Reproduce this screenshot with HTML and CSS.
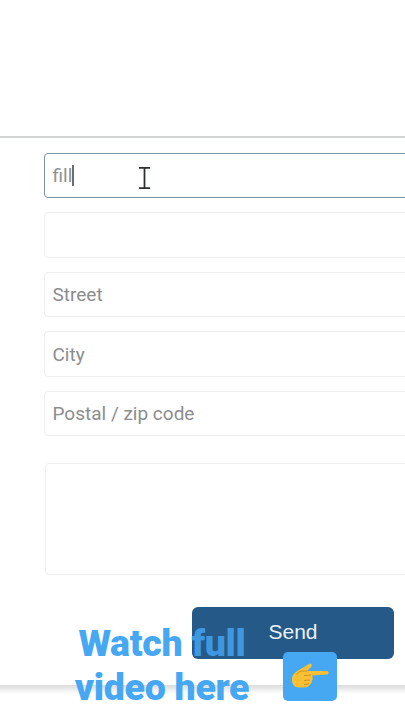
FILE: index.html
```html
<!DOCTYPE html>
<html lang="en">
<head>
<meta charset="utf-8">
<title>Contact form</title>
<link rel="stylesheet" href="styles.css">
</head>
<body>
<div class="page">
  <header class="top"></header>
  <main class="panel">
    <form class="form">
      <div class="field focused"><span class="typed">fill</span><span class="caret"></span></div>
      <div class="field"></div>
      <div class="field">Street</div>
      <div class="field">City</div>
      <div class="field">Postal / zip code</div>
      <div class="area"></div>
      <div class="actions"><div class="send">Send</div></div>
    </form>
  </main>
  <footer class="bottom"></footer>

  <svg class="ibeam" viewBox="0 0 14 24" aria-hidden="true">
    <path d="M1 1h12M1 23h12M7 1v22" fill="none" stroke="#2b2f30" stroke-width="1.9"/>
  </svg>
  <div class="promo">Watch <span class="full">full</span><br>video here</div>
  <div class="tile">
    <svg viewBox="0 0 40 30" width="40" height="30" aria-hidden="true">
      <path d="M2 17c0-4 3-7 7-9 3-2 7-4 10-6 2-1 4 1 2 3l-4 4 20 0c2 0 2 3 0 3.500l-15 1c1 2 1 4 0 5 0 2-1 3-2 4-1 2-3 3-6 3H9c-5 0-7-3-7-8.500z" fill="#f8c032"/>
      <path d="M17 9h-4c-3 0-5 1-6 3M21 13l-7 .500M20 18l-6 .500M19 22l-5 .300" fill="none" stroke="#d1921c" stroke-width="1"/>
    </svg>
  </div>
</div>
</body>
</html>
```
FILE: styles.css
```css
* { box-sizing: border-box; }
html, body { margin: 0; padding: 0; background: #fff; }
.page {
  position: relative;
  width: 405px;
  height: 720px;
  overflow: hidden;
  font-family: Roboto, "Liberation Sans", sans-serif;
  background: #fff;
}
.top { height: 138px; border-bottom: 2px solid #d2d3d3; }
.panel { height: 547px; padding: 14.750px 0 0 44px; }
.form { display: flex; flex-direction: column; width: 400px; }
.field {
  display: flex;
  align-items: center;
  height: 45.500px;
  margin-bottom: 14px;
  padding-left: 7.500px;
  border: 1.500px solid #eeeeee;
  border-radius: 4px;
  font-size: 19px;
  color: #8b8d8e;
  background: #fff;
}
.focused { border-color: #7f929f; color: #8f9191; }
.caret { width: 2px; height: 21px; background: #6a6e70; }
.area {
  height: 112px;
  margin: 13px 0 32px 1px;
  border: 1.500px solid #eeeeee;
  border-radius: 4px;
}
.actions { display: flex; padding-left: 148px; }
.send {
  display: flex;
  align-items: center;
  justify-content: center;
  width: 202px;
  height: 52px;
  border-radius: 6px;
  padding-bottom: 2px;
  background: #255a88;
  color: #e9f1f7;
  font-family: "Liberation Sans", sans-serif;
  font-size: 21px;
}
.bottom { height: 35px; background: linear-gradient(#dcdcdc, #e6e6e6 3px, #f4f4f4 6px, #fff 9px); }
.ibeam { position: absolute; left: 138px; top: 166px; width: 13px; height: 24px; }
.promo {
  position: absolute;
  left: 67px;
  top: 621px;
  width: 190px;
  font-size: 37.500px;
  line-height: 44px;
  font-weight: 900;
  letter-spacing: -0.300px;
  white-space: nowrap;
  color: #46a8f3;
  text-align: center;
}
.full { color: #3f97e0; }
.tile {
  position: absolute;
  left: 283px;
  top: 652px;
  width: 54px;
  height: 49px;
  display: flex;
  align-items: center;
  justify-content: center;
  border-radius: 5px;
  background: #46a8f3;
}
```
